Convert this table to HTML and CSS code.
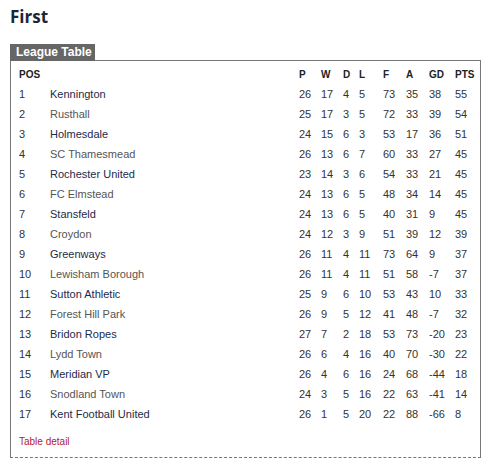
FILE: index.html
```html
<!DOCTYPE html>
<html>
<head>
<meta charset="utf-8">
<link rel="stylesheet" href="styles.css">
</head>
<body>
<h1 class="title">First</h1>
<div class="tab">League Table</div>
<div class="box">
<table class="league">
<colgroup>
<col class="c-pos"><col class="c-team"><col class="c-p"><col class="c-w"><col class="c-d"><col class="c-l"><col class="c-f"><col class="c-a"><col class="c-gd"><col class="c-pts">
</colgroup>
<thead>
<tr><th>POS</th><th></th><th>P</th><th>W</th><th>D</th><th>L</th><th>F</th><th>A</th><th>GD</th><th>PTS</th></tr>
</thead>
<tbody>
<tr class="odd"><td>1</td><td class="team">Kennington</td><td>26</td><td>17</td><td>4</td><td>5</td><td>73</td><td>35</td><td>38</td><td>55</td></tr>
<tr class="even"><td>2</td><td class="team">Rusthall</td><td>25</td><td>17</td><td>3</td><td>5</td><td>72</td><td>33</td><td>39</td><td>54</td></tr>
<tr class="odd"><td>3</td><td class="team">Holmesdale</td><td>24</td><td>15</td><td>6</td><td>3</td><td>53</td><td>17</td><td>36</td><td>51</td></tr>
<tr class="even"><td>4</td><td class="team">SC Thamesmead</td><td>26</td><td>13</td><td>6</td><td>7</td><td>60</td><td>33</td><td>27</td><td>45</td></tr>
<tr class="odd"><td>5</td><td class="team">Rochester United</td><td>23</td><td>14</td><td>3</td><td>6</td><td>54</td><td>33</td><td>21</td><td>45</td></tr>
<tr class="even"><td>6</td><td class="team">FC Elmstead</td><td>24</td><td>13</td><td>6</td><td>5</td><td>48</td><td>34</td><td>14</td><td>45</td></tr>
<tr class="odd"><td>7</td><td class="team">Stansfeld</td><td>24</td><td>13</td><td>6</td><td>5</td><td>40</td><td>31</td><td>9</td><td>45</td></tr>
<tr class="even"><td>8</td><td class="team">Croydon</td><td>24</td><td>12</td><td>3</td><td>9</td><td>51</td><td>39</td><td>12</td><td>39</td></tr>
<tr class="odd"><td>9</td><td class="team">Greenways</td><td>26</td><td>11</td><td>4</td><td>11</td><td>73</td><td>64</td><td>9</td><td>37</td></tr>
<tr class="even"><td>10</td><td class="team">Lewisham Borough</td><td>26</td><td>11</td><td>4</td><td>11</td><td>51</td><td>58</td><td>-7</td><td>37</td></tr>
<tr class="odd"><td>11</td><td class="team">Sutton Athletic</td><td>25</td><td>9</td><td>6</td><td>10</td><td>53</td><td>43</td><td>10</td><td>33</td></tr>
<tr class="even"><td>12</td><td class="team">Forest Hill Park</td><td>26</td><td>9</td><td>5</td><td>12</td><td>41</td><td>48</td><td>-7</td><td>32</td></tr>
<tr class="odd"><td>13</td><td class="team">Bridon Ropes</td><td>27</td><td>7</td><td>2</td><td>18</td><td>53</td><td>73</td><td>-20</td><td>23</td></tr>
<tr class="even"><td>14</td><td class="team">Lydd Town</td><td>26</td><td>6</td><td>4</td><td>16</td><td>40</td><td>70</td><td>-30</td><td>22</td></tr>
<tr class="odd"><td>15</td><td class="team">Meridian VP</td><td>26</td><td>4</td><td>6</td><td>16</td><td>24</td><td>68</td><td>-44</td><td>18</td></tr>
<tr class="even"><td>16</td><td class="team">Snodland Town</td><td>24</td><td>3</td><td>5</td><td>16</td><td>22</td><td>63</td><td>-41</td><td>14</td></tr>
<tr class="odd"><td>17</td><td class="team">Kent Football United</td><td>26</td><td>1</td><td>5</td><td>20</td><td>22</td><td>88</td><td>-66</td><td>8</td></tr>
</tbody>
</table>
<a class="detail" href="#">Table detail</a>
</div>
</body>
</html>
```

FILE: styles.css
```css
html, body {
  margin: 0;
  padding: 0;
  background: #fff;
}
body {
  padding: 0 9px 0 10px;
  font-family: "Liberation Sans", Arial, sans-serif;
  color: #333;
}
.title {
  margin: 0;
  padding-top: 6px;
  height: 38px;
  box-sizing: border-box;
  font-family: "Open Sans", "Liberation Sans", sans-serif;
  font-weight: 700;
  font-size: 17px;
  line-height: 22px;
  color: #1c2638;
}
.tab {
  display: inline-block;
  margin-top: 6px;
  background: #666;
  color: #fff;
  font-weight: 700;
  font-size: 12px;
  line-height: 17px;
  height: 17px;
  padding: 0 3px 0 6px;
  vertical-align: top;
}
.box {
  border-top: 1px solid #777;
  border-left: 1px solid #777;
  border-right: 1px solid #777;
  border-bottom: 1px dashed #777;
  margin-top: -1px;
  padding: 4px 8px 16px 8px;
  height: 398px;
  box-sizing: border-box;
}
.league {
  border-collapse: collapse;
  table-layout: fixed;
  width: 456px;
  font-size: 11px;
}
.league th, .league td {
  padding: 0;
  height: 20px;
  text-align: left;
  white-space: nowrap;
}
.league th {
  height: 19px;
  font-weight: 700;
  font-size: 10px;
  color: #222;
}
.c-pos { width: 31px; }
.c-team { width: 249px; }
.c-p { width: 22px; }
.c-w { width: 22px; }
.c-d { width: 16px; }
.c-l { width: 24px; }
.c-f { width: 23px; }
.c-a { width: 23px; }
.c-gd { width: 26px; }
.c-pts { width: 20px; }
.odd .team { color: #1d2a48; }
.even .team { color: #555; }
.detail {
  display: block;
  margin-top: 11px;
  font-size: 10px;
  line-height: 14px;
  color: #b3202a;
  text-decoration: none;
}
```
